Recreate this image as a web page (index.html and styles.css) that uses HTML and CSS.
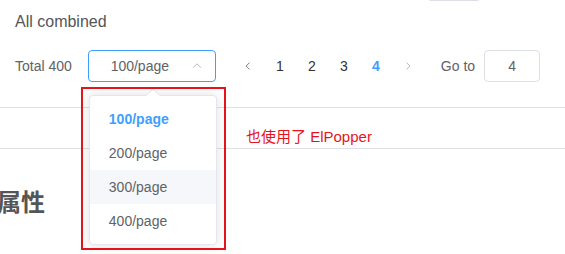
FILE: index.html
```html
<!DOCTYPE html>
<html lang="en">
<head>
  <meta charset="UTF-8">
  <title>Pagination - all combined</title>
  <link rel="stylesheet" href="styles.css">
</head>
<body>
  <div class="page">
    <div class="prev-block">
      <div class="prev-input"></div>
    </div>

    <div class="demo">
      <p class="demo-title">All combined</p>

      <div class="pagination">
        <span class="total">Total 400</span>

        <div class="sizes">
          <div class="select is-focus">
            <span class="select-value">100/page</span>
            <svg class="select-arrow" viewBox="0 0 1024 1024" width="14" height="14">
              <path d="M224 640 L512 352 L800 640" fill="none" stroke="currentColor" stroke-width="64"/>
            </svg>
          </div>

          <div class="popper">
            <span class="popper-arrow"></span>
            <ul class="option-list">
              <li class="option is-selected">100/page</li>
              <li class="option">200/page</li>
              <li class="option is-hover">300/page</li>
              <li class="option">400/page</li>
            </ul>
          </div>
          <div class="mark-box"></div>
        </div>

        <button class="btn-prev">
          <svg viewBox="0 0 1024 1024" width="12" height="12">
            <path d="M640 224 L352 512 L640 800" fill="none" stroke="currentColor" stroke-width="72"/>
          </svg>
        </button>
        <ul class="pager">
          <li class="number">1</li>
          <li class="number">2</li>
          <li class="number">3</li>
          <li class="number is-active">4</li>
        </ul>
        <button class="btn-next" disabled>
          <svg viewBox="0 0 1024 1024" width="12" height="12">
            <path d="M384 224 L672 512 L384 800" fill="none" stroke="currentColor" stroke-width="72"/>
          </svg>
        </button>

        <span class="jump">
          Go to
          <span class="jump-input">4</span>
        </span>
      </div>
    </div>

    <div class="row">
      <span class="mark-note">也使用了 ElPopper</span>
    </div>

    <h2 class="section-title">属性</h2>
  </div>
</body>
</html>
```

FILE: styles.css
```css
:root {
  --primary: #409eff;
  --text-regular: #606266;
  --text-primary: #303133;
  --text-placeholder: #a8abb2;
  --border: #dcdfe6;
  --border-light: #e4e7ed;
  --mark: #e5141c;
}

* {
  margin: 0;
  padding: 0;
  box-sizing: border-box;
}

html, body {
  width: 100%;
  height: 100%;
  overflow: hidden;
  background: #fff;
  font-family: "Liberation Sans", Arial, "Noto Sans CJK SC", sans-serif;
}

ul {
  list-style: none;
}

.page {
  position: relative;
}

/* bottom edge of a control from the demo above */
.prev-block {
  display: flex;
  padding-left: 427px;
  height: 0;
}

.prev-input {
  width: 54px;
  height: 30px;
  margin-top: -29px;
  border: 1px solid var(--border);
  border-radius: 4px;
}

.demo {
  padding: 10px 15px 0;
  height: 108px;
  border-bottom: 1px solid var(--border);
}

.demo-title {
  font-size: 16px;
  line-height: 24px;
  color: #555;
}

.pagination {
  display: flex;
  align-items: center;
  margin-top: 16px;
  height: 32px;
  font-size: 14px;
  color: var(--text-regular);
}

.total {
  margin-right: 16px;
}

.sizes {
  position: relative;
  margin-right: 16px;
}

.select {
  display: flex;
  align-items: center;
  width: 128px;
  height: 32px;
  padding: 0 11px;
  border: 1px solid var(--border);
  border-radius: 4px;
}

.select.is-focus {
  border-color: var(--primary);
}

.select-value {
  flex: 1;
  text-align: center;
  padding-right: 10px;
  color: var(--text-regular);
}

.select-arrow {
  color: var(--text-placeholder);
}

.popper {
  position: absolute;
  top: 45px;
  left: 1px;
  width: 128px;
  background: #fff;
  border: 1px solid var(--border-light);
  border-radius: 4px;
  box-shadow: 0 0 12px rgba(0, 0, 0, 0.12);
  z-index: 10;
}

.popper-arrow {
  position: absolute;
  top: -6px;
  left: 58px;
  width: 10px;
  height: 10px;
  background: #fff;
  border-top: 1px solid var(--border-light);
  border-left: 1px solid var(--border-light);
  transform: rotate(45deg);
}

.option-list {
  padding: 6px 0;
}

.option {
  height: 34px;
  line-height: 34px;
  padding: 0 19px;
  font-size: 14px;
  color: var(--text-regular);
}

.option.is-selected {
  color: var(--primary);
  font-weight: bold;
}

.option.is-hover {
  background: #f5f7fa;
}

.mark-box {
  position: absolute;
  top: 37px;
  left: -7px;
  width: 145px;
  height: 163px;
  border: 2px solid var(--mark);
  z-index: 11;
}

.btn-prev,
.btn-next {
  display: flex;
  align-items: center;
  justify-content: center;
  width: 32px;
  height: 32px;
  border: none;
  background: none;
  color: var(--text-regular);
}

.btn-next {
  color: var(--text-placeholder);
}

.pager {
  display: flex;
}

.number {
  width: 32px;
  height: 32px;
  line-height: 32px;
  text-align: center;
  color: var(--text-primary);
}

.number.is-active {
  color: var(--primary);
  font-weight: bold;
}

.jump {
  display: flex;
  align-items: center;
  margin-left: 17px;
  color: var(--text-regular);
}

.jump-input {
  width: 56px;
  height: 32px;
  line-height: 30px;
  margin-left: 9px;
  text-align: center;
  border: 1px solid var(--border);
  border-radius: 4px;
}

.row {
  height: 41px;
  padding: 19px 0 0 246px;
  border-bottom: 1px solid var(--border);
}

.mark-note {
  display: block;
  font-size: 15px;
  line-height: 20px;
  color: var(--mark);
}

.section-title {
  margin: 36px 0 0 -3px;
  font-family: "Noto Sans CJK SC", sans-serif;
  font-size: 24px;
  line-height: 32px;
  font-weight: bold;
  color: #555;
}
```
